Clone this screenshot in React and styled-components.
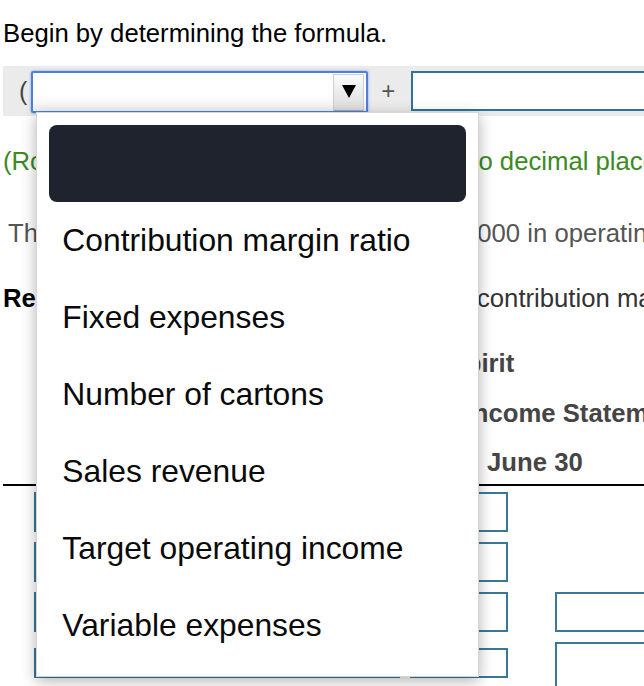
import React from 'react'
import styled, { createGlobalStyle } from 'styled-components'

const options = [
  '',
  'Contribution margin ratio',
  'Fixed expenses',
  'Number of cartons',
  'Sales revenue',
  'Target operating income',
  'Variable expenses',
]

// rows of the statement: which boxes are shown
const rows = [
  { second: false },
  { second: false },
  { second: true },
  { second: true, last: true },
]

function App() {
  return (
    <>
      <GlobalStyle />
      <Page>
        <Heading>Begin by determining the formula.</Heading>

        <FormulaBar>
          <Paren>(</Paren>
          <SelectWrap>
            <SelectBox>
              <ArrowButton>
                <svg width="14" height="13" viewBox="0 0 14 13">
                  <polygon points="0,0 14,0 7,13" fill="#000" />
                </svg>
              </ArrowButton>
            </SelectBox>
            <Menu>
              {options.map((opt, i) => (
                <MenuItem key={i} $active={i === 0}>
                  {opt}
                </MenuItem>
              ))}
            </Menu>
          </SelectWrap>
          <Operator>+</Operator>
          <AnswerInput />
        </FormulaBar>

        <Note>(Round this contribution margin ratio to two decimal places.)</Note>
        <Para>The company&rsquo;s owner wants to earn $50,000 in operating income.</Para>
        <Requirement>
          <b>Requirement 2.</b> Prove the answer with a contribution margin income statement.
        </Requirement>

        <Statement>
          <StatementHead>
            <div>Blue Spirit</div>
            <div>Contribution Margin Income Statement</div>
            <div>Month Ended June 30</div>
          </StatementHead>
          <Rows>
            {rows.map((r, i) => (
              <Row key={i}>
                <LabelBox $short={r.last} />
                <AmountBox $short={r.last} />
                {r.second ? <TotalBox $tall={r.last} /> : <span />}
              </Row>
            ))}
          </Rows>
        </Statement>
      </Page>
    </>
  )
}

export default App

const GlobalStyle = createGlobalStyle`
  html, body {
    margin: 0;
    padding: 0;
    background: #fff;
    overflow: hidden;
  }
  body {
    font-family: "Liberation Sans", Arial, Helvetica, sans-serif;
    color: #000;
  }
`

const Page = styled.div`
  width: 644px;
  height: 686px;
  padding-left: 3px;
  box-sizing: border-box;
  overflow: hidden;
`

const TextLine = styled.div`
  font-size: 25.7px;
  line-height: 30px;
  white-space: nowrap;
`

const Heading = styled(TextLine)`
  margin-top: 18px;
`

const FormulaBar = styled.div`
  margin-top: 18px;
  width: 900px;
  height: 50px;
  background: #ebebeb;
  display: flex;
  align-items: center;
`

const Paren = styled.span`
  margin-left: 16px;
  font-size: 25px;
  color: #444;
  line-height: 25px;
`

const SelectWrap = styled.div`
  position: relative;
  margin-left: 4px;
  margin-top: 1px;
`

const SelectBox = styled.div`
  width: 337px;
  height: 42px;
  box-sizing: border-box;
  border: 2px solid #4f7fd8;
  border-radius: 2px;
  box-shadow: 0 0 3px rgba(79, 127, 216, 0.7);
  background: linear-gradient(#ffffff 55%, #f1f1f1);
  display: flex;
  justify-content: flex-end;
  align-items: stretch;
  padding: 1px 2px 0 0;
`

const ArrowButton = styled.div`
  width: 31px;
  box-sizing: border-box;
  border: 1px solid #cfcfcf;
  border-bottom-color: #a9a9a9;
  background: linear-gradient(#fbfbfb, #dcdcdc);
  display: flex;
  align-items: center;
  justify-content: center;
  padding-bottom: 2px;
`

const Menu = styled.div`
  position: absolute;
  top: 41px;
  left: 5px;
  z-index: 10;
  width: 443px;
  box-sizing: border-box;
  padding: 12px;
  background: #fff;
  border: 1px solid #d6d6d6;
  box-shadow: 0 4px 14px rgba(0, 0, 0, 0.3);
`

const MenuItem = styled.div`
  height: 77px;
  display: flex;
  align-items: center;
  padding-left: 13px;
  font-size: 31.8px;
  color: #0a0a0a;
  white-space: nowrap;
  border-radius: 8px;
  background: ${p => (p.$active ? '#1f232d' : 'transparent')};
`

const Operator = styled.span`
  margin-left: 13px;
  font-size: 24px;
  line-height: 24px;
  color: #555;
`

const AnswerInput = styled.div`
  margin-left: 16px;
  width: 400px;
  height: 40px;
  box-sizing: border-box;
  border: 2px solid #2f7497;
  background: #fff;
`

const Note = styled(TextLine)`
  margin-top: 30px;
  color: #3a8b22;
`

const Para = styled(TextLine)`
  margin-top: 42px;
  padding-left: 5px;
  color: #555;
`

const Requirement = styled(TextLine)`
  margin-top: 35px;
  color: #333;
  b {
    color: #000;
  }
`

const Statement = styled.div`
  margin-top: 26px;
  width: 894px;
`

const StatementHead = styled.div`
  height: 145px;
  text-align: center;
  font-size: 25.7px;
  font-weight: bold;
  line-height: 49.5px;
  color: #454545;
  white-space: nowrap;
  border-bottom: 2px solid #000;
`

const Rows = styled.div`
  padding: 6px 0 0 31px;
`

const Row = styled.div`
  display: grid;
  grid-template-columns: 376px 145px 145px;
  align-items: start;
  height: 50px;
`

const Box = styled.div`
  height: 40px;
  box-sizing: border-box;
  border: 2px solid #3a7899;
  background: #fff;
`

const LabelBox = styled(Box)`
  width: 366px;
  margin-top: ${p => (p.$short ? '6px' : '0')};
  height: ${p => (p.$short ? '30px' : '40px')};
`

const AmountBox = styled(Box)`
  width: 98px;
  margin-top: ${p => (p.$short ? '6px' : '0')};
  height: ${p => (p.$short ? '30px' : '40px')};
`

const TotalBox = styled(Box)`
  width: 145px;
  height: ${p => (p.$tall ? '50px' : '40px')};
`
